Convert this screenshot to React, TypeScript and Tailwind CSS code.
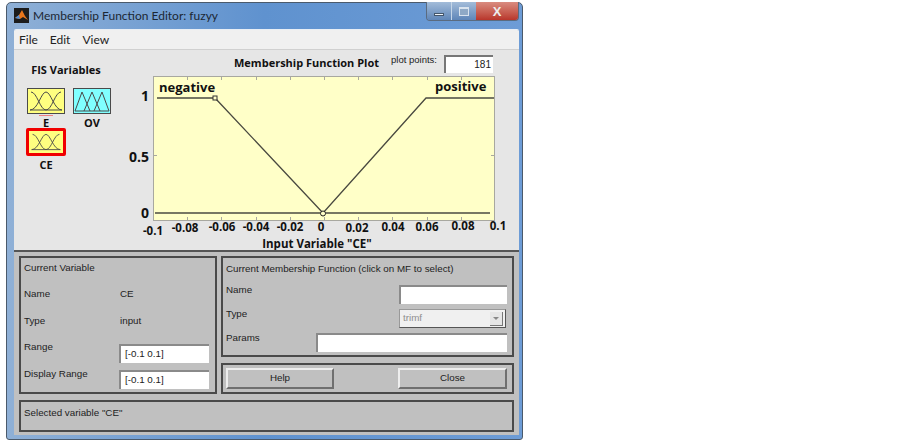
const ticks = [187, 221, 256, 290, 324, 358, 392, 427, 461];

const xLabels = [
  { t: "-0.1", x: 153, y: 235 },
  { t: "-0.08", x: 185, y: 232 },
  { t: "-0.06", x: 222, y: 231 },
  { t: "-0.04", x: 256, y: 231 },
  { t: "-0.02", x: 290, y: 231 },
  { t: "0", x: 321, y: 231 },
  { t: "0.02", x: 357, y: 232 },
  { t: "0.04", x: 393, y: 231 },
  { t: "0.06", x: 427, y: 231 },
  { t: "0.08", x: 463, y: 230 },
  { t: "0.1", x: 498, y: 230 },
];

const threeMf = [
  "M4 4 C10 4 13 22 19 22 C25 22 28 4 34 4",
  "M3 22 C11 22 14 4 19 4 C24 4 27 22 35 22",
  "M3 22 L35 22",
];
const fiveMf = [
  "M2 23 L9 4 L17 23",
  "M11 23 L19 4 L27 23",
  "M21 23 L29 4 L36 23",
  "M2 23 L36 23",
];

function MfIcon({ fill, lines }: { fill: string; lines: string[] }) {
  return (
    <svg width="38" height="26" viewBox="0 0 38 26" className="block shrink-0">
      <rect x="0.5" y="0.5" width="37" height="25" fill={fill} stroke="#4a4a4a" />
      {lines.map((d, i) => (
        <path key={i} d={d} fill="none" stroke="#4a4a4a" strokeWidth="1" />
      ))}
    </svg>
  );
}

function TextBox({ value, className }: { value?: string; className: string }) {
  return (
    <div className={`bg-white shrink-0 border-t-2 border-l-2 border-t-[#8a8a8a] border-l-[#8a8a8a] flex items-center px-1 text-[#222] ${className}`}>
      {value}
    </div>
  );
}

export default function App() {
  return (
    <div className="w-[903px] h-[441px] bg-white overflow-hidden pl-[6px] pt-[2px]">
      <div className="w-[517px] h-[438px] rounded-t-[5px] rounded-b-[3px] border border-[#4b5a6b] bg-linear-to-r from-[#8fb0d6] via-[#5f92cf] to-[#6d9cd6] flex flex-col font-['Liberation_Sans',sans-serif]">
        <div className="h-[26px] shrink-0 flex items-start pl-[7px] pt-[5px] relative">
          <svg width="15" height="15" viewBox="0 0 15 15" className="shrink-0">
            <rect width="15" height="15" fill="#1c1c1c" />
            <path d="M1 10 L5 7 L8 2 L11 8 L14 12 L9 9 L6 11 Z" fill="#e8761c" />
            <path d="M1 10 L5 7 L6 11 Z" fill="#4f8fd8" />
          </svg>
          <span className="ml-[4px] text-[12px] leading-[16px] text-[#1c2733] font-['Lato',sans-serif] whitespace-nowrap">Membership Function Editor: fuzyy</span>
          <div className="absolute right-[3px] top-[-1px] flex h-[19px] w-[93px] rounded-b-[4px] border border-t-0 border-[#5a6b80] overflow-hidden">
            <div className="w-[25px] bg-linear-to-b from-[#a3bcd9] to-[#5f86b8] border-r border-[#c5d6e8] flex items-end justify-center pb-[4px]">
              <div className="w-[10px] h-[3px] bg-[#eef3f8] border border-[#44566b]" />
            </div>
            <div className="w-[24px] bg-linear-to-b from-[#a3bcd9] to-[#5f86b8] flex items-center justify-center">
              <div className="w-[10px] h-[9px] bg-[#8fa9c6] border border-[#d9e3ee] border-t-2" />
            </div>
            <div className="flex-1 bg-linear-to-b from-[#d98c80] to-[#b8352b] flex items-center justify-center text-[#eee] text-[13px] font-bold leading-none">
              X
            </div>
          </div>
        </div>

        <div className="flex-1 ml-[7px] mr-[3px] mb-[4px] rounded-t-[2px] flex flex-col overflow-hidden border-t border-[#e8eef5]">
          <div className="h-[20px] shrink-0 bg-[#f0f0f0] border-b border-[#d0d0d0] flex items-center gap-[12px] pl-[5px] text-[12px] text-[#222] font-['Lato',sans-serif]">
            <span>File</span>
            <span>Edit</span>
            <span>View</span>
          </div>

          <div className="h-[202px] shrink-0 bg-[#e6e6e6] flex border-b-2 border-[#555]">
            <div className="w-[110px] shrink-0 pl-[13px]">
              <div className="mt-[13px] w-[78px] text-center text-[11px] leading-[14px] font-bold text-[#111] font-['Open_Sans',sans-serif] whitespace-nowrap">FIS Variables</div>
              <div className="mt-[11px] flex gap-[8px]">
                <div className="w-[38px] flex flex-col items-center">
                  <MfIcon fill="#ffff80" lines={threeMf} />
                  <div className="w-[14px] h-px mt-px bg-[#f08080]" />
                  <span className="text-[11px] leading-[14px] font-bold font-['Open_Sans',sans-serif] text-[#111]">E</span>
                </div>
                <div className="w-[38px] flex flex-col items-center">
                  <MfIcon fill="#80ffff" lines={fiveMf} />
                  <span className="mt-[2px] text-[11px] leading-[14px] font-bold font-['Open_Sans',sans-serif] text-[#111]">OV</span>
                </div>
              </div>
              <div className="w-[38px] flex flex-col items-center mt-[-2px]">
                <div className="shrink-0 rounded-[2px] border-[3px] border-[#f00000]">
                  <svg width="34" height="22" viewBox="0 0 38 26" preserveAspectRatio="none" className="block">
                    <rect width="38" height="26" fill="#ffff80" />
                    {threeMf.map((d, i) => (
                      <path key={i} d={d} fill="none" stroke="#4a4a4a" />
                    ))}
                  </svg>
                </div>
                <span className="mt-[2px] text-[11px] leading-[14px] font-bold font-['Open_Sans',sans-serif] text-[#111]">CE</span>
              </div>
            </div>

            <div className="w-[395px] shrink-0 flex flex-col">
              <div className="h-[26px] shrink-0 flex items-start">
                <div className="w-[267px] pl-[110px] mt-[5px] text-[11px] leading-[16px] font-bold text-[#111] font-['Open_Sans',sans-serif] whitespace-nowrap">Membership Function Plot</div>
                <div className="w-[53px] mt-[3px] text-[9.5px] leading-[13px] text-[#222] whitespace-nowrap">plot points:</div>
                <div className="mt-[5px] w-[49px] h-[18px] bg-white border-t-2 border-l-2 border-t-[#777] border-l-[#777] text-right pr-[2px] text-[10px] leading-[16px] text-[#222]">181</div>
              </div>
              <svg width="395" height="174" viewBox="124 76 395 174" className="block shrink-0 font-['Open_Sans',sans-serif]">
                <rect x="153.5" y="76.5" width="341" height="144" fill="#ffffc8" stroke="#a8a8a0" />
                {ticks.map((x) => (
                  <g key={x} stroke="#a8a8a0">
                    <line x1={x + 0.5} y1="77" x2={x + 0.5} y2="80" />
                    <line x1={x + 0.5} y1="217" x2={x + 0.5} y2="220" />
                  </g>
                ))}
                <line x1="154" y1="155.5" x2="157" y2="155.5" stroke="#a8a8a0" />
                <line x1="491" y1="155.5" x2="494" y2="155.5" stroke="#a8a8a0" />
                <line x1="155" y1="213" x2="490" y2="213" stroke="#4a4a40" strokeWidth="1.3" />
                <path d="M157 98 L215 98 L323 213 L426 98 L494 98" fill="none" stroke="#4a4a40" strokeWidth="1.3" />
                <rect x="213" y="96" width="4" height="4" fill="#ffffc8" stroke="#333" />
                <circle cx="323" cy="213.5" r="2.5" fill="#ffffc8" stroke="#222" />
                <g fontSize="13" fontWeight="700" fill="#111">
                  <text x="159" y="92">negative</text>
                  <text x="435" y="91">positive</text>
                </g>
                <g fontSize="14" fontWeight="700" fill="#111">
                  <text x="149" y="101" textAnchor="end">1</text>
                  <text x="149" y="162" textAnchor="end">0.5</text>
                  <text x="149" y="218" textAnchor="end">0</text>
                </g>
                <g fontSize="11.5" fontWeight="700" fill="#111" textAnchor="middle">
                  {xLabels.map((l) => (
                    <text key={l.t} x={l.x} y={l.y}>{l.t}</text>
                  ))}
                  <text x="317" y="248">Input Variable "CE"</text>
                </g>
              </svg>
            </div>
          </div>

          <div className="flex-1 bg-[#c0c0c0] pl-[5px] pr-[5px] pt-[4px] flex flex-col gap-[6px] text-[9.8px] text-[#222]">
            <div className="flex gap-[4px] h-[138px] shrink-0">
              <div className="w-[198px] shrink-0 border-2 border-[#4a4a4a] pl-[3px] pr-[6px] pt-[2px] flex flex-col">
                <div className="h-[15px] leading-[15px]">Current Variable</div>
                <div className="mt-[12px] h-[15px] flex items-center"><span className="w-[96px]">Name</span><span>CE</span></div>
                <div className="mt-[12px] h-[15px] flex items-center"><span className="w-[96px]">Type</span><span>input</span></div>
                <div className="mt-[14px] h-[20px] flex items-center"><span className="w-[96px] -mt-[11px]">Range</span><TextBox value="[-0.1 0.1]" className="w-[90px] h-[19px]" /></div>
                <div className="mt-[6px] h-[20px] flex items-center"><span className="w-[96px] -mt-[9px]">Display Range</span><TextBox value="[-0.1 0.1]" className="w-[90px] h-[19px]" /></div>
              </div>
              <div className="flex-1 flex flex-col gap-[6px]">
                <div className="h-[101px] shrink-0 border-2 border-[#4a4a4a] pl-[3px] pr-[5px] pt-[3px] flex flex-col">
                  <div className="h-[15px] leading-[15px]">Current Membership Function (click on MF to select)</div>
                  <div className="mt-[9px] h-[19px] flex items-center justify-between"><span className="-mt-[9px]">Name</span><TextBox className="w-[108px] h-[19px]" /></div>
                  <div className="mt-[5px] h-[19px] flex items-center justify-between">
                    <span className="-mt-[9px]">Type</span>
                    <div className="w-[107px] h-[19px] mr-[1px] bg-[#f0f0f0] border border-[#999] border-r-[#555] border-b-[#555] flex items-center justify-between pl-[3px] pr-[2px] text-[#8f8f8f]">
                      <span>trimf</span>
                      <span className="w-[13px] h-[14px] bg-[#e6e6e6] border-r border-b border-[#777] flex items-center justify-center">
                        <span className="w-0 h-0 border-l-[3px] border-r-[3px] border-t-[3px] border-l-transparent border-r-transparent border-t-[#888]" />
                      </span>
                    </div>
                  </div>
                  <div className="mt-[5px] h-[19px] flex items-center justify-between"><span className="-mt-[9px]">Params</span><TextBox className="w-[191px] h-[19px]" /></div>
                </div>
                <div className="flex-1 border-2 border-[#4a4a4a] pl-[3px] pr-[5px] flex items-center justify-between">
                  <button className="w-[108px] h-[21px] bg-[#c0c0c0] border-2 border-t-[#eeeeee] border-l-[#eeeeee] border-r-[#6f6f6f] border-b-[#6f6f6f] text-[#222]">Help</button>
                  <button className="w-[109px] h-[21px] bg-[#c0c0c0] border-2 border-t-[#eeeeee] border-l-[#eeeeee] border-r-[#6f6f6f] border-b-[#6f6f6f] text-[#222]">Close</button>
                </div>
              </div>
            </div>
            <div className="h-[32px] shrink-0 border-2 border-[#4a4a4a] pl-[3px] pt-[3px] leading-[15px]">Selected variable "CE"</div>
          </div>
        </div>
      </div>
    </div>
  );
}
